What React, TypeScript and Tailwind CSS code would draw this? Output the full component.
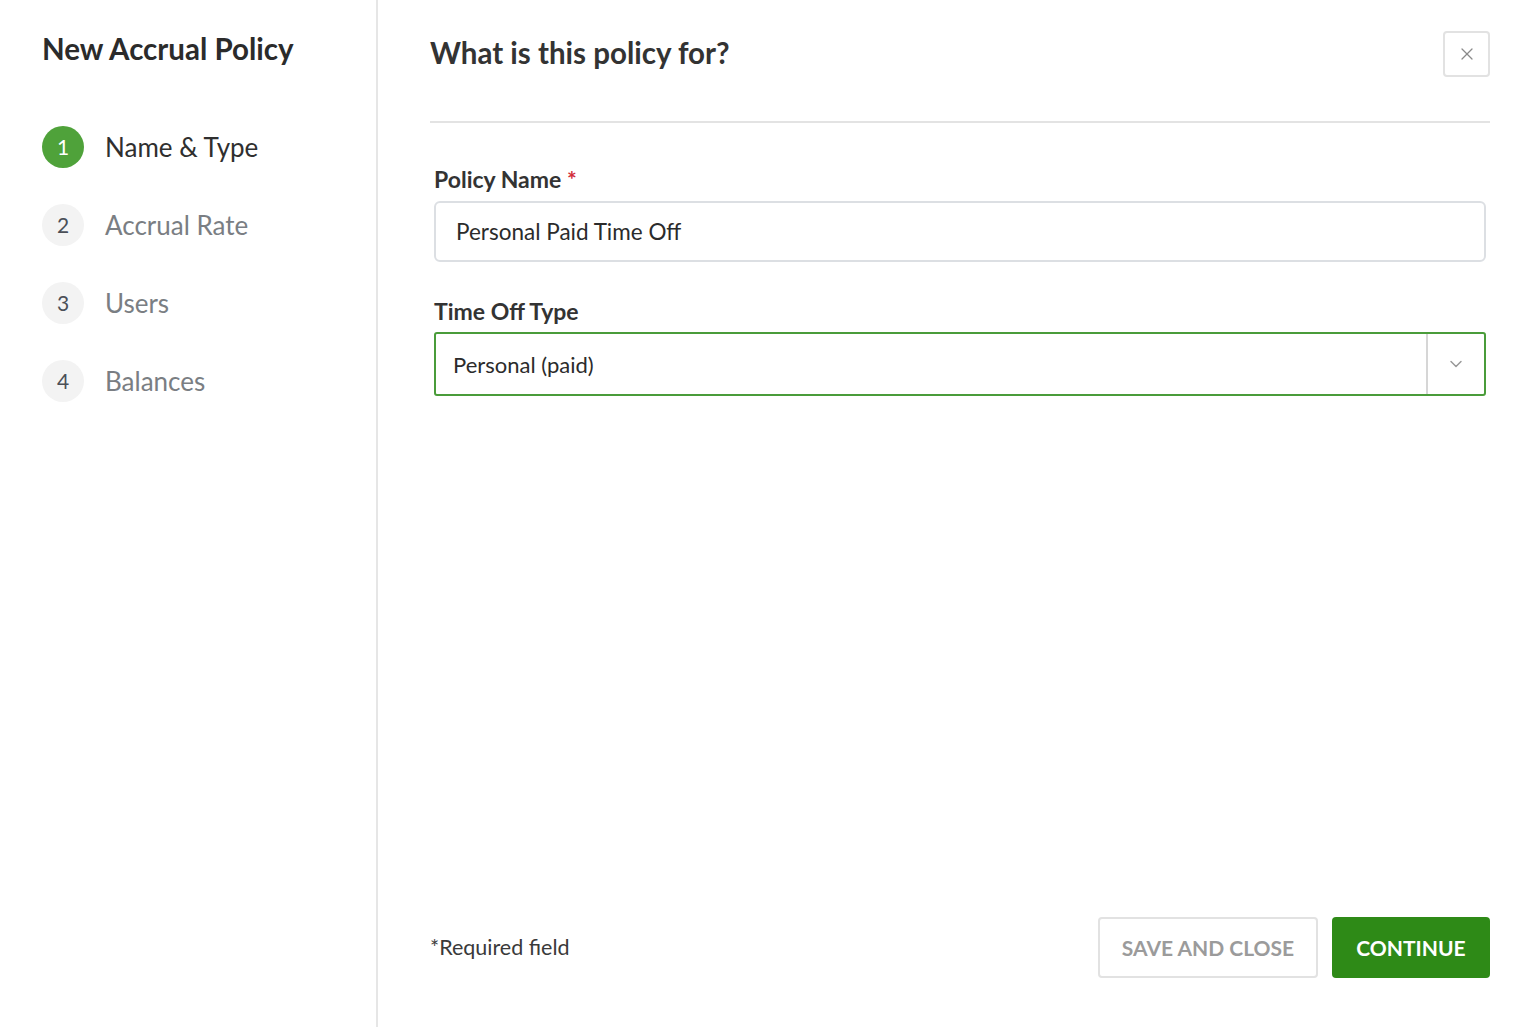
import { X, ChevronDown } from "lucide-react"

const steps = [
    { n: 1, label: "Name & Type", active: true },
    { n: 2, label: "Accrual Rate", active: false },
    { n: 3, label: "Users", active: false },
    { n: 4, label: "Balances", active: false },
]

export default function App() {
    return (
        <div className="flex h-[1027px] w-full bg-white text-[#2f2f2f]" style={{ fontFamily: "Lato, 'Open Sans', sans-serif" }}>
            {/* sidebar */}
            <aside className="w-[378px] shrink-0 border-r-2 border-[#e6e6e6] pl-[42px] pt-[29px]">
                <h1 className="text-[29.5px] font-bold leading-[40px] text-[#2b2b2b]">New Accrual Policy</h1>
                <ol className="mt-[57px] flex flex-col gap-[36px]">
                    {steps.map((s) => (
                        <li key={s.n} className="flex items-center gap-[21px]">
                            <span
                                className={
                                    s.active
                                        ? "flex h-[42px] w-[42px] items-center justify-center rounded-full bg-[#4fa23a] text-[21px] text-white"
                                        : "flex h-[42px] w-[42px] items-center justify-center rounded-full bg-[#f3f3f3] text-[21px] text-[#4a4f57]"
                                }
                            >
                                {s.n}
                            </span>
                            <span className={s.active ? "text-[26px] text-[#2f2f2f]" : "text-[26px] text-[#7a7e83]"}>{s.label}</span>
                        </li>
                    ))}
                </ol>
            </aside>

            {/* main */}
            <main className="flex flex-1 flex-col pl-[52px] pr-[46px] pt-[31px] pb-[49px]">
                <div className="flex items-start justify-between border-b-2 border-[#e3e3e3] pb-[44px]">
                    <h2 className="pt-[2px] text-[29.5px] font-bold leading-[40px] text-[#333]">What is this policy for?</h2>
                    <button className="flex h-[46px] w-[47px] items-center justify-center rounded-[4px] border-2 border-[#e2e2e2] text-[#8a8a8a]">
                        <X size={20} strokeWidth={1.5} />
                    </button>
                </div>

                <div className="pl-[4px] pr-[4px]">
                    <label className="mt-[41px] block text-[23px] font-bold leading-[30px] text-[#333]">
                        Policy Name <span className="text-[#d22d3b]">*</span>
                    </label>
                    <div className="mt-[7px] flex h-[61px] items-center rounded-[6px] border-2 border-[#dcdfe3] px-[20px] text-[22.5px] text-[#2b2b2b]">
                        Personal Paid Time Off
                    </div>

                    <label className="mt-[34px] block text-[23px] font-bold leading-[30px] text-[#333]">Time Off Type</label>
                    <div className="mt-[6px] flex h-[64px] items-stretch rounded-[3px] border-2 border-[#4a9c3a]">
                        <div className="flex flex-1 items-center px-[17px] text-[22px] text-[#2b2b2b]">Personal (paid)</div>
                        <div className="flex w-[58px] items-center justify-center border-l-2 border-[#d6d6d6] text-[#999]">
                            <ChevronDown size={20} strokeWidth={1.75} />
                        </div>
                    </div>
                </div>

                <div className="mt-auto flex items-center justify-between">
                    <span className="text-[21.5px] text-[#3a3a3a]">*Required field</span>
                    <div className="flex gap-[14px]">
                        <button className="h-[61px] w-[220px] rounded-[4px] border-2 border-[#e2e2e2] text-[21px] font-bold text-[#9b9b9b]">
                            SAVE AND CLOSE
                        </button>
                        <button className="h-[61px] w-[158px] rounded-[4px] bg-[#2e8a17] text-[21px] font-bold text-white">
                            CONTINUE
                        </button>
                    </div>
                </div>
            </main>
        </div>
    )
}
